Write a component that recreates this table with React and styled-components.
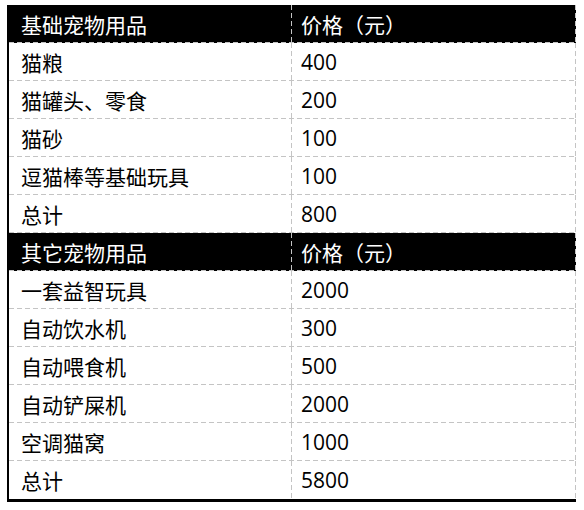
import styled, { createGlobalStyle } from 'styled-components';

const GlobalStyle = createGlobalStyle`
  html, body {
    margin: 0;
    padding: 0;
    background: #fff;
  }
  body {
    font-family: "Open Sans", "Noto Sans CJK SC", sans-serif;
  }
`;

const sections = [
  {
    title: '基础宠物用品',
    items: [
      ['猫粮', '400'],
      ['猫罐头、零食', '200'],
      ['猫砂', '100'],
      ['逗猫棒等基础玩具', '100'],
      ['总计', '800'],
    ],
  },
  {
    title: '其它宠物用品',
    items: [
      ['一套益智玩具', '2000'],
      ['自动饮水机', '300'],
      ['自动喂食机', '500'],
      ['自动铲屎机', '2000'],
      ['空调猫窝', '1000'],
      ['总计', '5800'],
    ],
  },
];

const App = () => {
  const rows = sections.flatMap((section) => [
    { head: true, name: section.title, price: '价格（元）' },
    ...section.items.map(([name, price]) => ({ head: false, name, price })),
  ]);

  return (
    <>
      <GlobalStyle />
      <Table>
        {rows.map((row, i) => (
          <Row key={i} $head={row.head} $last={i === rows.length - 1}>
            <NameCell>{row.name}</NameCell>
            <PriceCell>{row.price}</PriceCell>
          </Row>
        ))}
      </Table>
    </>
  );
};

// dashed grey rules drawn as gradients so the dashes come out long like the original
const hDash = 'repeating-linear-gradient(90deg, #c4c4c4 0 5px, transparent 5px 8px)';
const vDash = 'repeating-linear-gradient(180deg, #c4c4c4 0 5px, transparent 5px 8px)';

const Table = styled.div`
  width: 567px;
  margin: 5px 0 0 7px;
  border-left: 2px solid #000;
  border-bottom: 3px solid #000;
  display: flex;
  flex-direction: column;
`;

const Row = styled.div`
  display: grid;
  grid-template-columns: 283px 1fr;
  height: 38px;
  box-sizing: border-box;
  padding-bottom: 1px;
  background-color: ${(p) => (p.$head ? '#000' : '#fff')};
  background-image: ${(p) => (p.$last ? vDash : `${hDash}, ${vDash}`)};
  background-size: ${(p) => (p.$last ? '1px 100%' : '100% 1px, 1px 100%')};
  background-position: ${(p) => (p.$last ? 'right top' : 'left bottom, right top')};
  background-repeat: no-repeat;
  color: ${(p) => (p.$head ? '#fff' : '#000')};
  font-size: 21px;
`;

const NameCell = styled.div`
  display: flex;
  align-items: center;
  padding-left: 12px;
  background-image: ${vDash};
  background-size: 1px 100%;
  background-position: right top;
  background-repeat: no-repeat;
  white-space: nowrap;
`;

const PriceCell = styled.div`
  display: flex;
  align-items: center;
  padding-left: 9px;
  white-space: nowrap;
`;

export default App;
